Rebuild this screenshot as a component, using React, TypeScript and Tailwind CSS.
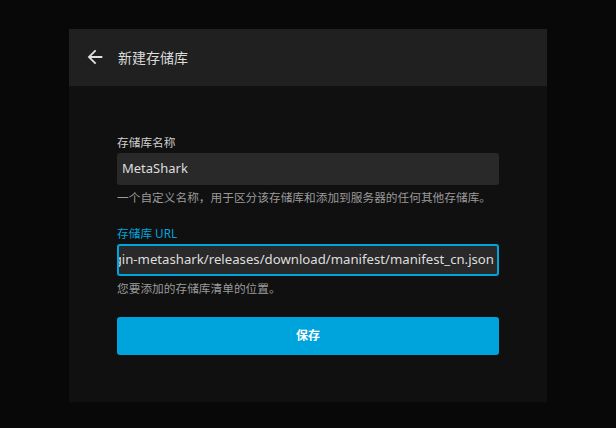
const font = { fontFamily: '"Noto Sans", "Noto Sans CJK SC", sans-serif' };

const BackArrow = () => (
  <svg width="22" height="22" viewBox="0 0 24 24" fill="currentColor">
    <path d="M20 11H7.83l5.59-5.59L12 4l-8 8 8 8 1.41-1.41L7.83 13H20v-2z" />
  </svg>
);

export default function App() {
  return (
    <div className="min-h-screen w-full bg-[#080808] pt-[29px] pl-[69px]" style={font}>
      {/* dialog */}
      <div className="w-[478px] h-[373px] bg-[#101010] flex flex-col">
        <div className="h-[57px] bg-[#202020] flex items-center pl-[49px] relative shrink-0">
          <button className="absolute left-[15px] top-[17px] text-[#e0e0e0]">
            <BackArrow />
          </button>
          <span className="text-[14px] text-[#dcdcdc]">新建存储库</span>
        </div>

        <div className="px-[48px] pt-[48px]">
          <label className="block text-[11.7px] leading-[16px] text-[#cfcfcf] mb-[3px]">存储库名称</label>
          <div className="h-[32px] bg-[#292929] rounded-[3px] flex items-center px-[5px] text-[13px] text-[#dedede]">
            MetaShark
          </div>
          <p className="mt-[4px] text-[11.7px] leading-[16px] text-[#9a9a9a] whitespace-nowrap">
            一个自定义名称，用于区分该存储库和添加到服务器的任何其他存储库。
          </p>

          <label className="block mt-[20px] text-[11.7px] leading-[16px] text-[#00a4dc] mb-[3px]">存储库 URL</label>
          <div className="h-[32px] bg-[#292929] rounded-[3px] border-2 border-[#00a4dc] flex items-center justify-end overflow-hidden px-[3px] text-[13.2px] text-[#dedede] whitespace-nowrap">
            <span>https://github.com/cxfksword/jellyfin-plugin-metashark/releases/download/manifest/manifest_cn.json</span>
          </div>
          <p className="mt-[4px] text-[11.7px] leading-[16px] text-[#9a9a9a]">您要添加的存储库清单的位置。</p>

          <button className="mt-[21px] w-full h-[38px] bg-[#00a4dc] rounded-[3px] text-white text-[12px] font-bold">
            保存
          </button>
        </div>
      </div>
    </div>
  );
}
